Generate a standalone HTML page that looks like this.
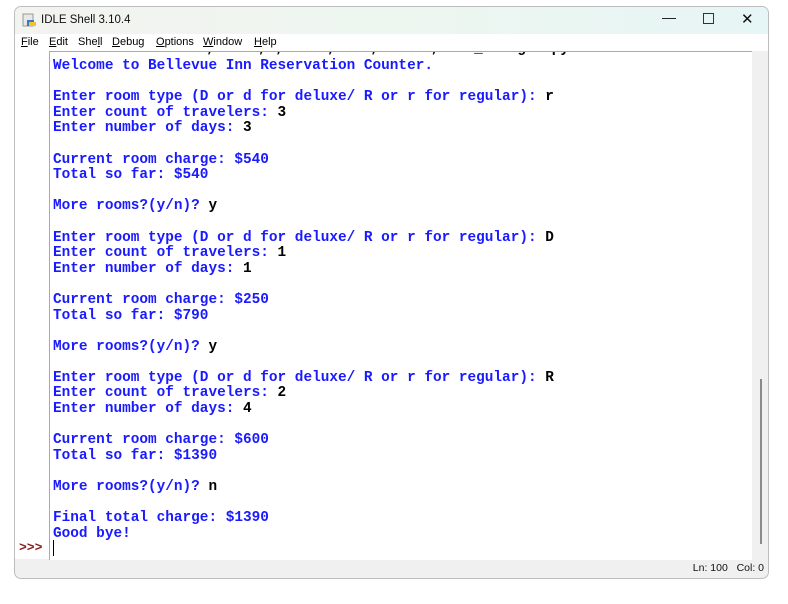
<!DOCTYPE html>
<html><head><meta charset="utf-8"><style>
body{margin:0;width:788px;height:604px;background:#fff;position:relative;overflow:hidden;font-family:"Liberation Sans",sans-serif}
.win{position:absolute;left:14px;top:6px;width:753px;height:571px;border:1px solid #bdbdbd;border-radius:7px;background:#f0f0f0;overflow:hidden}
.title{position:absolute;left:0;top:0;right:0;height:27px;background:linear-gradient(90deg,#f3f3ef,#eef6f0 50%,#e6f5f5);font-size:11.5px}
.title span{position:absolute;left:26px;top:7px;color:#111}
.menu{position:absolute;left:0;top:27px;right:0;height:17px;background:#fff;font-size:11px}
.menu span{position:absolute;top:2px}
.text{position:absolute;left:34px;top:44px;width:702px;height:508px;background:#fff;border-left:1px solid #aaa;border-top:1px solid #aaa;overflow:hidden}
.gut{position:absolute;left:0;top:44px;width:34px;height:508px;background:#fff}
.sb{position:absolute;left:737px;top:44px;width:16px;height:508px;background:#f0f0f0}
pre{margin:0;position:absolute;left:38px;top:52px;font-family:"Liberation Mono",monospace;font-size:14.4px;line-height:15.6px;color:#1a1aff;font-weight:bold}
b{color:#000}
.status{position:absolute;right:4px;bottom:4px;font-size:10.5px;color:#111}
</style></head><body>
<div class="win">
<div class="title"><svg style="position:absolute;left:7px;top:6px" width="14" height="14"><rect x="1" y="1" width="10" height="12" fill="#e8e8e8" stroke="#999"/><path d="M5 7h7v6H5z" fill="#3b78c2"/><path d="M7 9h7v4H7z" fill="#f2c32b"/></svg><span>IDLE Shell 3.10.4</span>
<span style="left:647px;top:2px;font-size:14px">—</span><span style="left:688px;top:6px;width:9px;height:9px;border:1px solid #333"></span><span style="left:726px;top:3px;font-size:15px">✕</span></div>
<div class="menu"><span style="left:6px"><u>F</u>ile</span><span style="left:34px"><u>E</u>dit</span><span style="left:63px">She<u>l</u>l</span><span style="left:97px"><u>D</u>ebug</span><span style="left:141px"><u>O</u>ptions</span><span style="left:188px"><u>W</u>indow</span><span style="left:239px"><u>H</u>elp</span></div>
<div class="gut"></div>
<div class="text"><div style="position:absolute;left:70px;top:-11px;font-family:'Liberation Mono',monospace;font-size:14.4px;font-weight:bold;color:#000">Checkin: 2,Total,5,Total,Room,Status,Room_Charges.py</div></div>
<div class="sb"><div style="position:absolute;left:8px;top:328px;width:2px;height:165px;background:#8a8a8a"></div></div>
<pre>Welcome to Bellevue Inn Reservation Counter.

Enter room type (D or d for deluxe/ R or r for regular): <b>r</b>
Enter count of travelers: <b>3</b>
Enter number of days: <b>3</b>

Current room charge: $540
Total so far: $540

More rooms?(y/n)? <b>y</b>

Enter room type (D or d for deluxe/ R or r for regular): <b>D</b>
Enter count of travelers: <b>1</b>
Enter number of days: <b>1</b>

Current room charge: $250
Total so far: $790

More rooms?(y/n)? <b>y</b>

Enter room type (D or d for deluxe/ R or r for regular): <b>R</b>
Enter count of travelers: <b>2</b>
Enter number of days: <b>4</b>

Current room charge: $600
Total so far: $1390

More rooms?(y/n)? <b>n</b>

Final total charge: $1390
Good bye!</pre>
<div style="position:absolute;left:4px;top:533px;font-family:'Liberation Mono',monospace;font-size:13px;font-weight:bold;color:#8b1a1a">&gt;&gt;&gt;</div>
<div style="position:absolute;left:38px;top:533px;width:1px;height:16px;background:#000"></div>
<div class="status">Ln: 100 &nbsp; Col: 0</div>
</div>
</body></html>
